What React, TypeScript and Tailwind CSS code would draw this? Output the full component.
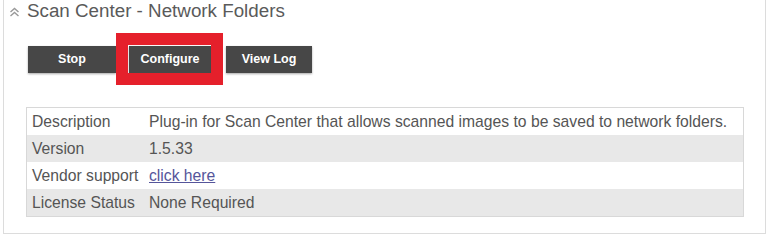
import React from 'react';

const rows = [
  { label: 'Description', value: 'Plug-in for Scan Center that allows scanned images to be saved to network folders.' },
  { label: 'Version', value: '1.5.33' },
  { label: 'Vendor support', value: 'click here', link: true },
  { label: 'License Status', value: 'None Required' },
];

const Btn = ({ children, w }: { children: React.ReactNode; w: string }) => (
  <div className={`h-[27px] ${w} bg-[#474747] text-white text-[12.5px] font-bold flex items-center justify-center shadow-[0_1px_2px_rgba(0,0,0,0.35)]`}>
    {children}
  </div>
);

export default function App() {
  return (
    <div className="w-[768px] h-[237px] bg-white font-['Liberation_Sans',Arial,sans-serif] overflow-hidden">
      <div className="ml-[3px] w-[763px] h-[234px] border-l border-r border-b border-[#dcdcdc]">
        {/* title */}
        <div className="flex items-center h-[23px] pl-[5px]">
          <svg width="11" height="10" viewBox="0 0 11 10" className="mr-[7px] mt-[1px]">
            <path d="M1.5 5 L5.5 1.5 L9.5 5" fill="none" stroke="#9a9a9a" strokeWidth="1.4" />
            <path d="M1.5 9 L5.5 5.5 L9.5 9" fill="none" stroke="#9a9a9a" strokeWidth="1.4" />
          </svg>
          <span className="text-[18.8px] text-[#5a5a5a] leading-none">Scan Center - Network Folders</span>
        </div>

        {/* buttons */}
        <div className="flex items-start pl-[24px] mt-[23px]">
          <Btn w="w-[88px]">Stop</Btn>
          <div className="relative ml-[13px]">
            <Btn w="w-[82px]">Configure</Btn>
            <div className="absolute -left-[13px] -right-[12px] -top-[13px] -bottom-[12px] border-[12px] border-[#e5202b]" />
          </div>
          <div className="ml-[15px]">
            <Btn w="w-[86px]">View Log</Btn>
          </div>
        </div>

        {/* info table */}
        <div className="ml-[22px] mt-[34px] w-[718px] border border-[#d8d8d8] text-[15.7px] text-[#555]">
          {rows.map((r, i) => (
            <div
              key={r.label}
              className={`grid grid-cols-[122px_1fr] h-[27px] items-center ${i % 2 === 1 ? 'bg-[#e8e8e8]' : 'bg-white'}`}
            >
              <div className="pl-[5px] whitespace-nowrap">{r.label}</div>
              <div className="whitespace-nowrap">
                {r.link ? (
                  <a href="#" className="text-[#55559a] underline">{r.value}</a>
                ) : (
                  r.value
                )}
              </div>
            </div>
          ))}
        </div>
      </div>
    </div>
  );
}
